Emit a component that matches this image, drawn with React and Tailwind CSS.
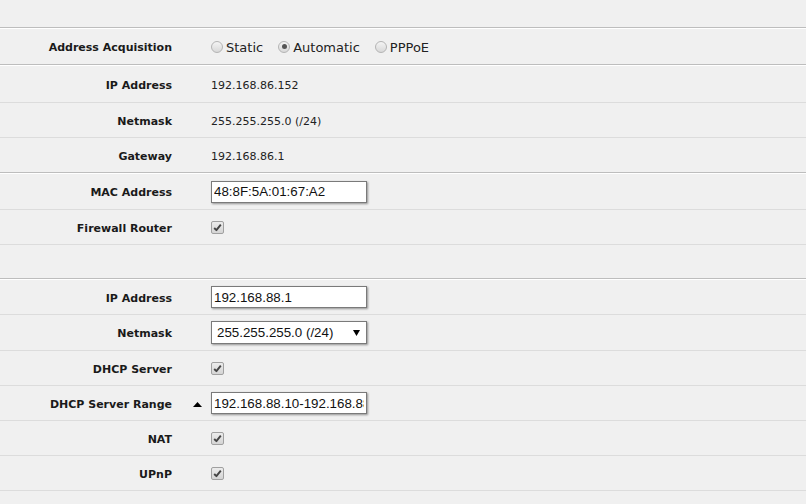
import React from "react";

const labelCls =
  "w-[172px] shrink-0 text-right font-bold text-[11px] text-[#1a1a1a] pt-[4px]";
const font = { fontFamily: '"DejaVu Sans", Verdana, sans-serif' };
const arial = { fontFamily: '"Liberation Sans", Arial, sans-serif' };

function Row({ label, h = "h-[34px]", border = "single", pre, children }) {
  return (
    <div>
      <div className={`flex items-center ${h}`}>
        <div className={labelCls}>{label}</div>
        <div className="w-[39px] shrink-0 flex justify-end pr-[9px]">{pre}</div>
        <div className="flex items-center text-[11px] text-[#222]">{children}</div>
      </div>
      {border === "single" && <div className="h-px bg-[#dcdcdc]" />}
      {border === "double" && (
        <>
          <div className="h-px bg-[#bdbdbd]" />
          <div className="h-px bg-white" />
        </>
      )}
    </div>
  );
}

function Radio({ checked, label }) {
  return (
    <span className="flex items-center mr-[15px]">
      <span className="w-[12px] h-[12px] rounded-full border border-[#b4b4b4] bg-gradient-to-b from-[#f4f4f4] to-[#d8d8d8] flex items-center justify-center">
        {checked && <span className="w-[5px] h-[5px] rounded-full bg-[#555]" />}
      </span>
      <span className="ml-[3px] text-[13px] text-[#222] pt-[2px]">{label}</span>
    </span>
  );
}

function Check() {
  return (
    <span className="w-[13px] h-[13px] rounded-[2px] border border-[#a0a0a0] bg-gradient-to-b from-[#ececec] to-[#d4d4d4] flex items-center justify-center">
      <svg width="9" height="9" viewBox="0 0 9 9">
        <path d="M1.2 5 L3.4 7.2 L7.8 1.6" stroke="#444" strokeWidth="1.9" fill="none" strokeLinejoin="round" />
      </svg>
    </span>
  );
}

function Input({ value }) {
  return (
    <input
      readOnly
      value={value}
      className="w-[156px] h-[22px] bg-white border border-[#7a7a7a] shadow-[1px_1px_2px_rgba(0,0,0,0.4)] px-[2px] text-[13.33px] text-[#111] outline-none"
      style={arial}
    />
  );
}

function Val({ children }) {
  return <span className="pt-[4px]">{children}</span>;
}

export default function App() {
  return (
    <div className="w-[806px] h-[504px] bg-[#f0f0f0] overflow-hidden" style={font}>
      <div className="h-[27px]" />
      <div className="h-px bg-[#bdbdbd]" />
      <div className="h-px bg-white" />
      <Row label="Address Acquisition" h="h-[35px]" border="double">
        <Radio label="Static" />
        <Radio checked label="Automatic" />
        <Radio label="PPPoE" />
      </Row>
      <Row label="IP Address" h="h-[36px]"><Val>192.168.86.152</Val></Row>
      <Row label="Netmask"><Val>255.255.255.0 (/24)</Val></Row>
      <Row label="Gateway" border="double"><Val>192.168.86.1</Val></Row>
      <Row label="MAC Address" h="h-[35px]">
        <Input value="48:8F:5A:01:67:A2" />
      </Row>
      <Row label="Firewall Router">
        <Check />
      </Row>
      <Row label="" h="h-[33px]" border="double" />
      <Row label="IP Address">
        <Input value="192.168.88.1" />
      </Row>
      <Row label="Netmask" h="h-[35px]">
        <div
          className="w-[156px] h-[23px] bg-white border border-[#7a7a7a] shadow-[1px_1px_2px_rgba(0,0,0,0.4)] pl-[5px] pr-[6px] flex items-center justify-between text-[13.33px] text-[#111]"
          style={arial}
        >
          <span>255.255.255.0 (/24)</span>
          <svg width="7" height="6" viewBox="0 0 7 6">
            <path d="M0 0 H7 L3.5 6 Z" fill="#000" />
          </svg>
        </div>
      </Row>
      <Row label="DHCP Server">
        <Check />
      </Row>
      <Row
        label="DHCP Server Range"
        pre={
          <svg width="9" height="5" viewBox="0 0 9 5" className="mt-[3px]">
            <path d="M0 5 H9 L4.5 0 Z" fill="#000" />
          </svg>
        }
      >
        <Input value="192.168.88.10-192.168.88.254" />
      </Row>
      <Row label="NAT">
        <Check />
      </Row>
      <Row label="UPnP">
        <Check />
      </Row>
    </div>
  );
}
